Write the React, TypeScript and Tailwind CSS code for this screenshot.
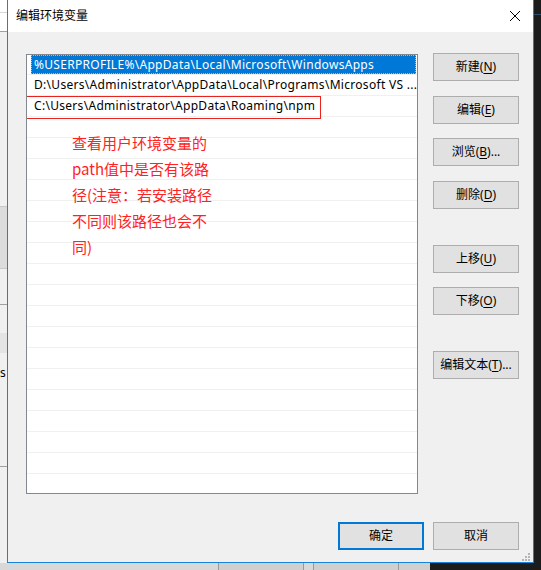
import React from 'react';

const ui = "font-['Noto_Sans','Noto_Sans_CJK_SC',sans-serif]";

function Btn({ label, hot, tail = '', className = '' }: { label: string; hot: string; tail?: string; className?: string }) {
  return (
    <button
      className={`h-[28px] w-[86px] border border-[#adadad] bg-[#e1e1e1] text-[12px] text-black leading-none flex items-center justify-center ${className}`}
    >
      {label}(<span className="underline underline-offset-2">{hot}</span>){tail}
    </button>
  );
}

const emptyRows = Array.from({ length: 18 });

export default function App() {
  return (
    <div className={`relative w-[541px] h-[570px] overflow-hidden bg-[#f0f0f0] ${ui}`}>
      {/* desktop behind the dialog */}
      <div className="absolute left-0 top-0 w-[7px] h-[570px] bg-[#f0f0f0]">
        <div className="h-[13px] bg-white border-b border-[#d6d6d6]" />
        <div className="h-[19px] bg-white border-b border-[#a0a0a0]" />
        <div className="h-[174px]" />
        <div className="h-[63px] bg-[#dcdcdc] border-t border-[#a0a0a0] border-b border-[#c8c8c8]" />
        <div className="h-[36px] border-b border-[#a0a0a0]" />
        <div className="h-[28px]" />
        <div className="h-[20px] bg-[#e4e4e4]" />
        <div className="h-[40px] relative overflow-visible">
          <span className="absolute left-0 top-[14px] text-[12px] leading-none text-black">s</span>
        </div>
        <div className="h-[74px] border-b border-[#a0a0a0]" />
      </div>
      <div className="absolute right-0 top-0 w-[8px] h-[570px] bg-[#1c1c1c]">
        <div className="mt-[14px] h-px bg-[#2f4f6f]" />
      </div>
      <div className="absolute left-0 bottom-0 w-[541px] h-[7px] flex">
        <div className="w-[219px] h-full bg-[#d8d8d8] border-r border-[#9a9a9a]" />
        <div className="w-[85px] h-full bg-[#cfcfcf] border-r border-[#9a9a9a]" />
        <div className="w-[10px] h-full bg-[#d8d8d8] border-r border-[#9a9a9a]" />
        <div className="w-[85px] h-full bg-[#cfcfcf] border-r border-[#9a9a9a]" />
        <div className="w-[31px] h-full bg-[#d0d0d0]" />
        <div className="flex-1 h-full bg-[#1c1c1c]" />
      </div>

      {/* dialog window */}
      <div className="absolute left-[7px] top-0 w-[527px] h-[563px] border-x border-b border-[#1883d7] bg-[#f0f0f0] flex flex-col">
        <div className="h-[32px] bg-white flex items-center justify-between pl-[8px] pr-[8px]">
          <span className="text-[12px] text-black">编辑环境变量</span>
          <svg width="12" height="12" viewBox="0 0 12 12" className="mr-[4px]">
            <path d="M1 1L11 11M11 1L1 11" stroke="#000" strokeWidth="1" />
          </svg>
        </div>

        <div className="flex-1 flex flex-col pl-[18px] pr-[14px]">
          <div className="flex mt-[22px]">
            {/* list */}
            <div className="relative w-[392px] h-[440px] border border-[#828790] bg-white overflow-hidden text-[12px] tracking-[0.3px]">
              <div className="h-[20px] border-b border-[#f0f0f0] pl-[4px] pr-[1px]">
                <div className="h-[19px] bg-[#0078d7] outline outline-1 outline-dotted outline-offset-[-1px] outline-[#f9a66a] text-white leading-[19px] pl-[3px] whitespace-nowrap">
                  %USERPROFILE%\AppData\Local\Microsoft\WindowsApps
                </div>
              </div>
              <div className="h-[21px] border-b border-[#f0f0f0] pl-[7px] leading-[20px] text-black whitespace-nowrap">
                D:\Users\Administrator\AppData\Local\Programs\Microsoft VS ...
              </div>
              <div className="h-[21px] border-b border-[#f0f0f0] pl-[7px] leading-[20px] text-black whitespace-nowrap">
                C:\Users\Administrator\AppData\Roaming\npm
              </div>
              {emptyRows.map((_, i) => (
                <div key={i} className="h-[21px] border-b border-[#f0f0f0]" />
              ))}

              {/* annotation */}
              <div className="absolute left-[-1px] top-[41px] w-[295px] h-[23px] border border-[#e8231e]" />
              <div className="absolute left-[45px] top-[75px] text-[15px] leading-[26px] tracking-normal text-[#ff2222] font-['Noto_Sans_CJK_SC',sans-serif]">
                查看用户环境变量的
                <br />
                path值中是否有该路
                <br />
                径(注意：若安装路径
                <br />
                不同则该路径也会不
                <br />
                同)
              </div>
            </div>

            {/* side buttons */}
            <div className="ml-[15px] mt-[-1px] flex flex-col">
              <Btn label="新建" hot="N" />
              <Btn label="编辑" hot="E" className="mt-[15px]" />
              <Btn label="浏览" hot="B" tail="..." className="mt-[14px]" />
              <Btn label="删除" hot="D" className="mt-[15px]" />
              <Btn label="上移" hot="U" className="mt-[36px]" />
              <Btn label="下移" hot="O" className="mt-[14px]" />
              <Btn label="编辑文本" hot="T" tail="..." className="mt-[36px]" />
            </div>
          </div>

          <div className="flex justify-end gap-[9px] mt-[28px]">
            <button className="h-[28px] w-[86px] border-2 border-[#0078d7] bg-[#e1e1e1] text-[12px] text-black">
              确定
            </button>
            <button className="h-[28px] w-[86px] border border-[#adadad] bg-[#e1e1e1] text-[12px] text-black">
              取消
            </button>
          </div>

          <div className="flex justify-end mt-[2px] mr-[-12px]">
            <svg width="10" height="10" viewBox="0 0 10 10">
              <rect x="7" y="1" width="2" height="2" fill="#b5b5b5" />
              <rect x="4" y="4" width="2" height="2" fill="#b5b5b5" />
              <rect x="7" y="4" width="2" height="2" fill="#b5b5b5" />
              <rect x="1" y="7" width="2" height="2" fill="#b5b5b5" />
              <rect x="4" y="7" width="2" height="2" fill="#b5b5b5" />
              <rect x="7" y="7" width="2" height="2" fill="#b5b5b5" />
            </svg>
          </div>
        </div>
      </div>
    </div>
  );
}
